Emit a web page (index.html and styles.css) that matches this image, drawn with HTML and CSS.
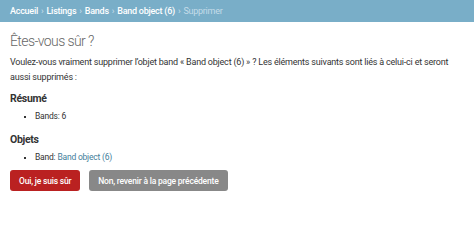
FILE: index.html
```html
<!DOCTYPE html>
<html lang="fr">
<head>
<meta charset="utf-8">
<title>Supprimer</title>
<link rel="stylesheet" href="styles.css">
</head>
<body>
<div class="breadcrumbs">
  <a href="#">Accueil</a><span class="sep">›</span><a href="#">Listings</a><span class="sep">›</span><a href="#">Bands</a><span class="sep">›</span><a href="#">Band object (6)</a><span class="sep">›</span><span class="current">Supprimer</span>
</div>
<div class="content">
  <h1 class="title">Êtes-vous sûr ?</h1>
  <p class="intro">Voulez-vous vraiment supprimer l’objet band « Band object (6) » ? Les éléments suivants sont liés à celui-ci et seront aussi supprimés :</p>
  <h2 class="section">Résumé</h2>
  <ul class="list">
    <li>Bands: 6</li>
  </ul>
  <h2 class="section">Objets</h2>
  <ul class="list">
    <li>Band: <a href="#" class="link">Band object (6)</a></li>
  </ul>
  <div class="actions">
    <button class="btn btn-danger" type="button">Oui, je suis sûr</button>
    <button class="btn btn-cancel" type="button">Non, revenir à la page précédente</button>
  </div>
</div>
</body>
</html>
```

FILE: styles.css
```css
html, body {
  margin: 0;
  padding: 0;
  background: #fff;
}

body {
  font-family: Roboto, "Liberation Sans", sans-serif;
  color: #333;
  font-size: 9px;
}

.breadcrumbs {
  height: 22px;
  box-sizing: border-box;
  padding: 0 10px;
  display: flex;
  align-items: center;
  background: #79aec8;
  color: #c4dce8;
  font-size: 9px;
  letter-spacing: -0.25px;
  font-weight: 500;
}

.breadcrumbs a {
  color: #fff;
  text-decoration: none;
}

.breadcrumbs .sep {
  margin: 0 3px;
  color: #c4dce8;
}

.breadcrumbs .current {
  font-weight: 400;
}

.content {
  padding: 0 10px;
}

.title {
  margin: 10px 0 0;
  font-size: 14px;
  letter-spacing: -0.6px;
  line-height: 18px;
  font-weight: 300;
  color: #666;
}

.intro {
  margin: 5px 0 0;
  font-size: 9px;
  letter-spacing: -0.2px;
  line-height: 15px;
  color: #333;
}

.section {
  margin: 7px 0 0;
  font-size: 10.5px;
  letter-spacing: -0.3px;
  line-height: 14px;
  font-weight: 700;
  color: #333;
}

.section + .list + .section {
  margin-top: 10px;
}

.list {
  margin: 3px 0 0;
  padding-left: 25px;
  list-style: square;
  font-size: 8.5px;
  letter-spacing: -0.2px;
  line-height: 14px;
  color: #333;
}

.list li::marker {
  font-size: 7px;
}

.link {
  color: #447e9b;
  text-decoration: none;
}

.actions {
  margin-top: 6px;
  display: flex;
  gap: 9px;
}

.btn {
  height: 21px;
  padding: 0 9px;
  border: none;
  border-radius: 3px;
  color: #fff;
  font-family: Roboto, "Liberation Sans", sans-serif;
  font-size: 8.5px;
  letter-spacing: -0.2px;
  font-weight: 500;
}

.btn-danger {
  background: #ba2121;
}

.btn-cancel {
  background: #888;
}
```
